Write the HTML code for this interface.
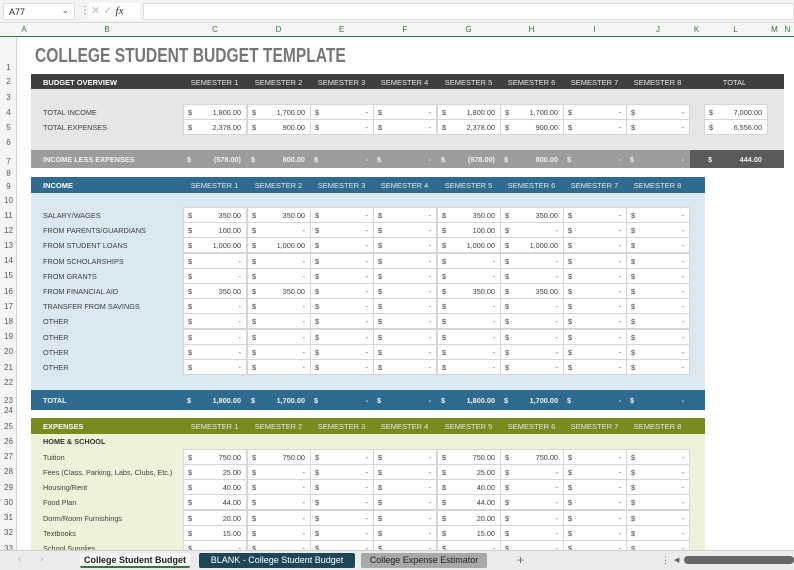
<!DOCTYPE html>
<html><head><meta charset="utf-8"><style>
*{margin:0;padding:0;box-sizing:border-box}
body{width:794px;height:570px;overflow:hidden;background:#fff;font-family:"Liberation Sans",sans-serif;position:relative;color:#404040}
div{position:absolute}
.fb{left:0;top:0;width:794px;height:23px;background:#f3f3f3;border-bottom:1px solid #d8d8d8}
.hd{left:0;top:23px;width:794px;height:14px;background:#f5f5f5;border-bottom:1px solid #2e7d32;font-size:8px;color:#2e7d32}
.hd span{position:absolute;top:2px;text-align:center}
.rn{left:0;top:37px;width:17px;height:514px;background:#f5f5f5;border-right:1px solid #d0d0d0;font-size:8px;color:#555}
.rn span{position:absolute;left:0;width:17px;text-align:center}
.bar{height:15px;font-size:7.5px;color:#e6e6e6}
.bar b{position:absolute;left:12px;top:4px;color:#fff;font-size:7.5px}
.sm{position:absolute;top:4px;width:63px;text-align:center}
.l{position:absolute;left:43px;font-size:7.3px;color:#404040}
.c{background:#fff;border:1px solid #d6d6d6;width:64px;height:16px;font-size:7.3px;color:#404040}
.c s,.t s{position:absolute;left:4px;top:3px;text-decoration:none}
.c u,.t u{position:absolute;right:5px;top:3px;text-decoration:none}
.t{height:15px;width:63px;font-size:7.3px;font-weight:bold;color:#f2f2f2}
.tab{top:553px;height:15px;font-size:9px;text-align:center;padding-top:2px;border-radius:2px}
</style></head><body>
<div class="fb">
<div style="left:3px;top:3px;width:72px;height:17px;background:#fff;border:1px solid #ddd;font-size:9px;padding:3px 5px;color:#222">A77<span style="position:absolute;right:5px;top:1px;font-size:9px;color:#555">&#8964;</span></div>
<div style="left:80px;top:5px;font-size:10px;color:#666">&#8942;</div>
<div style="left:88px;top:3px;width:52px;height:17px;background:#fff;font-size:11px;color:#bbb;padding:1px 3px">&#10005; &#10003; <i style="color:#333;font-family:'Liberation Serif',serif">fx</i></div>
<div style="left:143px;top:3px;width:651px;height:17px;background:#fff;border:1px solid #ddd"></div>
</div>
<div class="hd">
<span style="left:17px;width:14px">A</span><span style="left:31px;width:152px">B</span><span style="left:183px;width:64px">C</span><span style="left:247px;width:63px">D</span><span style="left:310px;width:63px">E</span><span style="left:373px;width:64px">F</span><span style="left:437px;width:63px">G</span><span style="left:500px;width:63px">H</span><span style="left:563px;width:63px">I</span><span style="left:626px;width:64px">J</span><span style="left:690px;width:13px">K</span><span style="left:703px;width:65px">L</span><span style="left:768px;width:13px">M</span><span style="left:781px;width:13px">N</span>
</div>
<div class="rn">
<span style="top:26px">1</span><span style="top:40px">2</span><span style="top:56px">3</span><span style="top:71px">4</span><span style="top:86px">5</span><span style="top:101px">6</span><span style="top:120px">7</span><span style="top:132px">8</span><span style="top:145px">9</span><span style="top:159px">10</span><span style="top:174px">11</span><span style="top:189px">12</span><span style="top:204px">13</span><span style="top:219px">14</span><span style="top:234px">15</span><span style="top:250px">16</span><span style="top:265px">17</span><span style="top:280px">18</span><span style="top:295px">19</span><span style="top:310px">20</span><span style="top:326px">21</span><span style="top:341px">22</span><span style="top:359px">23</span><span style="top:369px">24</span><span style="top:385px">25</span><span style="top:400px">26</span><span style="top:415px">27</span><span style="top:430px">28</span><span style="top:446px">29</span><span style="top:461px">30</span><span style="top:476px">31</span><span style="top:491px">32</span><span style="top:507px">33</span>
</div>

<div style="left:35px;top:45px;font-size:20px;font-weight:bold;color:#777;transform:scaleX(0.78);transform-origin:left top;white-space:nowrap">COLLEGE STUDENT BUDGET TEMPLATE</div>

<!-- overview -->
<div style="left:31px;top:89px;width:753px;height:79px;background:#e6e6e6"></div>
<div class="bar" style="left:31px;top:74px;width:753px;background:#3f3f3f"><b>BUDGET OVERVIEW</b>
<span class="sm" style="left:152px">SEMESTER 1</span><span class="sm" style="left:216px">SEMESTER 2</span><span class="sm" style="left:279px">SEMESTER 3</span><span class="sm" style="left:342px">SEMESTER 4</span><span class="sm" style="left:406px">SEMESTER 5</span><span class="sm" style="left:469px">SEMESTER 6</span><span class="sm" style="left:532px">SEMESTER 7</span><span class="sm" style="left:595px">SEMESTER 8</span><span class="sm" style="left:672px">TOTAL</span></div>
<div class="l" style="top:108px">TOTAL INCOME</div>
<div class="l" style="top:123px">TOTAL EXPENSES</div>
<div class="c" style="left:183px;top:104px"><s>$</s><u>1,800.00</u></div><div class="c" style="left:247px;top:104px"><s>$</s><u>1,700.00</u></div><div class="c" style="left:310px;top:104px"><s>$</s><u>-</u></div><div class="c" style="left:373px;top:104px"><s>$</s><u>-</u></div><div class="c" style="left:437px;top:104px"><s>$</s><u>1,800.00</u></div><div class="c" style="left:500px;top:104px"><s>$</s><u>1,700.00</u></div><div class="c" style="left:563px;top:104px"><s>$</s><u>-</u></div><div class="c" style="left:626px;top:104px"><s>$</s><u>-</u></div><div class="c" style="left:704px;top:104px"><s>$</s><u>7,000.00</u></div>
<div class="c" style="left:183px;top:119px"><s>$</s><u>2,378.00</u></div><div class="c" style="left:247px;top:119px"><s>$</s><u>900.00</u></div><div class="c" style="left:310px;top:119px"><s>$</s><u>-</u></div><div class="c" style="left:373px;top:119px"><s>$</s><u>-</u></div><div class="c" style="left:437px;top:119px"><s>$</s><u>2,378.00</u></div><div class="c" style="left:500px;top:119px"><s>$</s><u>900.00</u></div><div class="c" style="left:563px;top:119px"><s>$</s><u>-</u></div><div class="c" style="left:626px;top:119px"><s>$</s><u>-</u></div><div class="c" style="left:704px;top:119px"><s>$</s><u>6,556.00</u></div>
<div style="left:31px;top:150px;width:659px;height:18px;background:#9c9c9c"></div>
<div style="left:690px;top:150px;width:94px;height:18px;background:#5a5a5a"></div>
<div style="left:43px;top:155px;font-size:7.3px;font-weight:bold;color:#f2f2f2">INCOME LESS EXPENSES</div>
<div class="t" style="left:183px;top:152px"><s>$</s><u>(578.00)</u></div><div class="t" style="left:247px;top:152px"><s>$</s><u>800.00</u></div><div class="t" style="left:310px;top:152px"><s>$</s><u>-</u></div><div class="t" style="left:373px;top:152px"><s>$</s><u>-</u></div><div class="t" style="left:437px;top:152px"><s>$</s><u>(578.00)</u></div><div class="t" style="left:500px;top:152px"><s>$</s><u>800.00</u></div><div class="t" style="left:563px;top:152px"><s>$</s><u>-</u></div><div class="t" style="left:626px;top:152px"><s>$</s><u>-</u></div><div class="t" style="left:704px;top:152px"><s>$</s><u>444.00</u></div>

<!-- income -->
<div style="left:31px;top:193px;width:674px;height:197px;background:#dae8f2"></div>
<div class="bar" style="left:31px;top:177px;width:674px;height:16px;background:#2f6b8f"><b>INCOME</b>
<span class="sm" style="left:152px">SEMESTER 1</span><span class="sm" style="left:216px">SEMESTER 2</span><span class="sm" style="left:279px">SEMESTER 3</span><span class="sm" style="left:342px">SEMESTER 4</span><span class="sm" style="left:406px">SEMESTER 5</span><span class="sm" style="left:469px">SEMESTER 6</span><span class="sm" style="left:532px">SEMESTER 7</span><span class="sm" style="left:595px">SEMESTER 8</span></div>
<div class="l" style="top:211px">SALARY/WAGES</div>
<div class="l" style="top:226px">FROM PARENTS/GUARDIANS</div>
<div class="l" style="top:241px">FROM STUDENT LOANS</div>
<div class="l" style="top:257px">FROM SCHOLARSHIPS</div>
<div class="l" style="top:272px">FROM GRANTS</div>
<div class="l" style="top:287px">FROM FINANCIAL AID</div>
<div class="l" style="top:302px">TRANSFER FROM SAVINGS</div>
<div class="l" style="top:317px">OTHER</div>
<div class="l" style="top:333px">OTHER</div>
<div class="l" style="top:348px">OTHER</div>
<div class="l" style="top:363px">OTHER</div>
<div class="c" style="left:183px;top:207px"><s>$</s><u>350.00</u></div><div class="c" style="left:247px;top:207px"><s>$</s><u>350.00</u></div><div class="c" style="left:310px;top:207px"><s>$</s><u>-</u></div><div class="c" style="left:373px;top:207px"><s>$</s><u>-</u></div><div class="c" style="left:437px;top:207px"><s>$</s><u>350.00</u></div><div class="c" style="left:500px;top:207px"><s>$</s><u>350.00</u></div><div class="c" style="left:563px;top:207px"><s>$</s><u>-</u></div><div class="c" style="left:626px;top:207px"><s>$</s><u>-</u></div>
<div class="c" style="left:183px;top:222px"><s>$</s><u>100.00</u></div><div class="c" style="left:247px;top:222px"><s>$</s><u>-</u></div><div class="c" style="left:310px;top:222px"><s>$</s><u>-</u></div><div class="c" style="left:373px;top:222px"><s>$</s><u>-</u></div><div class="c" style="left:437px;top:222px"><s>$</s><u>100.00</u></div><div class="c" style="left:500px;top:222px"><s>$</s><u>-</u></div><div class="c" style="left:563px;top:222px"><s>$</s><u>-</u></div><div class="c" style="left:626px;top:222px"><s>$</s><u>-</u></div>
<div class="c" style="left:183px;top:237px"><s>$</s><u>1,000.00</u></div><div class="c" style="left:247px;top:237px"><s>$</s><u>1,000.00</u></div><div class="c" style="left:310px;top:237px"><s>$</s><u>-</u></div><div class="c" style="left:373px;top:237px"><s>$</s><u>-</u></div><div class="c" style="left:437px;top:237px"><s>$</s><u>1,000.00</u></div><div class="c" style="left:500px;top:237px"><s>$</s><u>1,000.00</u></div><div class="c" style="left:563px;top:237px"><s>$</s><u>-</u></div><div class="c" style="left:626px;top:237px"><s>$</s><u>-</u></div>
<div class="c" style="left:183px;top:253px"><s>$</s><u>-</u></div><div class="c" style="left:247px;top:253px"><s>$</s><u>-</u></div><div class="c" style="left:310px;top:253px"><s>$</s><u>-</u></div><div class="c" style="left:373px;top:253px"><s>$</s><u>-</u></div><div class="c" style="left:437px;top:253px"><s>$</s><u>-</u></div><div class="c" style="left:500px;top:253px"><s>$</s><u>-</u></div><div class="c" style="left:563px;top:253px"><s>$</s><u>-</u></div><div class="c" style="left:626px;top:253px"><s>$</s><u>-</u></div>
<div class="c" style="left:183px;top:268px"><s>$</s><u>-</u></div><div class="c" style="left:247px;top:268px"><s>$</s><u>-</u></div><div class="c" style="left:310px;top:268px"><s>$</s><u>-</u></div><div class="c" style="left:373px;top:268px"><s>$</s><u>-</u></div><div class="c" style="left:437px;top:268px"><s>$</s><u>-</u></div><div class="c" style="left:500px;top:268px"><s>$</s><u>-</u></div><div class="c" style="left:563px;top:268px"><s>$</s><u>-</u></div><div class="c" style="left:626px;top:268px"><s>$</s><u>-</u></div>
<div class="c" style="left:183px;top:283px"><s>$</s><u>350.00</u></div><div class="c" style="left:247px;top:283px"><s>$</s><u>350.00</u></div><div class="c" style="left:310px;top:283px"><s>$</s><u>-</u></div><div class="c" style="left:373px;top:283px"><s>$</s><u>-</u></div><div class="c" style="left:437px;top:283px"><s>$</s><u>350.00</u></div><div class="c" style="left:500px;top:283px"><s>$</s><u>350.00</u></div><div class="c" style="left:563px;top:283px"><s>$</s><u>-</u></div><div class="c" style="left:626px;top:283px"><s>$</s><u>-</u></div>
<div class="c" style="left:183px;top:298px"><s>$</s><u>-</u></div><div class="c" style="left:247px;top:298px"><s>$</s><u>-</u></div><div class="c" style="left:310px;top:298px"><s>$</s><u>-</u></div><div class="c" style="left:373px;top:298px"><s>$</s><u>-</u></div><div class="c" style="left:437px;top:298px"><s>$</s><u>-</u></div><div class="c" style="left:500px;top:298px"><s>$</s><u>-</u></div><div class="c" style="left:563px;top:298px"><s>$</s><u>-</u></div><div class="c" style="left:626px;top:298px"><s>$</s><u>-</u></div>
<div class="c" style="left:183px;top:313px"><s>$</s><u>-</u></div><div class="c" style="left:247px;top:313px"><s>$</s><u>-</u></div><div class="c" style="left:310px;top:313px"><s>$</s><u>-</u></div><div class="c" style="left:373px;top:313px"><s>$</s><u>-</u></div><div class="c" style="left:437px;top:313px"><s>$</s><u>-</u></div><div class="c" style="left:500px;top:313px"><s>$</s><u>-</u></div><div class="c" style="left:563px;top:313px"><s>$</s><u>-</u></div><div class="c" style="left:626px;top:313px"><s>$</s><u>-</u></div>
<div class="c" style="left:183px;top:329px"><s>$</s><u>-</u></div><div class="c" style="left:247px;top:329px"><s>$</s><u>-</u></div><div class="c" style="left:310px;top:329px"><s>$</s><u>-</u></div><div class="c" style="left:373px;top:329px"><s>$</s><u>-</u></div><div class="c" style="left:437px;top:329px"><s>$</s><u>-</u></div><div class="c" style="left:500px;top:329px"><s>$</s><u>-</u></div><div class="c" style="left:563px;top:329px"><s>$</s><u>-</u></div><div class="c" style="left:626px;top:329px"><s>$</s><u>-</u></div>
<div class="c" style="left:183px;top:344px"><s>$</s><u>-</u></div><div class="c" style="left:247px;top:344px"><s>$</s><u>-</u></div><div class="c" style="left:310px;top:344px"><s>$</s><u>-</u></div><div class="c" style="left:373px;top:344px"><s>$</s><u>-</u></div><div class="c" style="left:437px;top:344px"><s>$</s><u>-</u></div><div class="c" style="left:500px;top:344px"><s>$</s><u>-</u></div><div class="c" style="left:563px;top:344px"><s>$</s><u>-</u></div><div class="c" style="left:626px;top:344px"><s>$</s><u>-</u></div>
<div class="c" style="left:183px;top:359px"><s>$</s><u>-</u></div><div class="c" style="left:247px;top:359px"><s>$</s><u>-</u></div><div class="c" style="left:310px;top:359px"><s>$</s><u>-</u></div><div class="c" style="left:373px;top:359px"><s>$</s><u>-</u></div><div class="c" style="left:437px;top:359px"><s>$</s><u>-</u></div><div class="c" style="left:500px;top:359px"><s>$</s><u>-</u></div><div class="c" style="left:563px;top:359px"><s>$</s><u>-</u></div><div class="c" style="left:626px;top:359px"><s>$</s><u>-</u></div>
<div style="left:31px;top:390px;width:674px;height:20px;background:#2f6b8f"></div>
<div style="left:43px;top:396px;font-size:7.3px;font-weight:bold;color:#f2f2f2">TOTAL</div>
<div class="t" style="left:183px;top:393px"><s>$</s><u>1,800.00</u></div><div class="t" style="left:247px;top:393px"><s>$</s><u>1,700.00</u></div><div class="t" style="left:310px;top:393px"><s>$</s><u>-</u></div><div class="t" style="left:373px;top:393px"><s>$</s><u>-</u></div><div class="t" style="left:437px;top:393px"><s>$</s><u>1,800.00</u></div><div class="t" style="left:500px;top:393px"><s>$</s><u>1,700.00</u></div><div class="t" style="left:563px;top:393px"><s>$</s><u>-</u></div><div class="t" style="left:626px;top:393px"><s>$</s><u>-</u></div>

<!-- expenses -->
<div style="left:31px;top:434px;width:674px;height:117px;background:#eef2d8"></div>
<div class="bar" style="left:31px;top:418px;width:674px;height:16px;background:#7b8a1e"><b>EXPENSES</b>
<span class="sm" style="left:152px">SEMESTER 1</span><span class="sm" style="left:216px">SEMESTER 2</span><span class="sm" style="left:279px">SEMESTER 3</span><span class="sm" style="left:342px">SEMESTER 4</span><span class="sm" style="left:406px">SEMESTER 5</span><span class="sm" style="left:469px">SEMESTER 6</span><span class="sm" style="left:532px">SEMESTER 7</span><span class="sm" style="left:595px">SEMESTER 8</span></div>
<div class="l" style="top:437px;font-weight:bold;color:#333">HOME &amp; SCHOOL</div>
<div class="l" style="top:453px">Tuition</div>
<div class="l" style="top:468px">Fees (Class, Parking, Labs, Clubs, Etc.)</div>
<div class="l" style="top:483px">Housing/Rent</div>
<div class="l" style="top:498px">Food Plan</div>
<div class="l" style="top:514px">Dorm/Room Furnishings</div>
<div class="l" style="top:529px">Textbooks</div>
<div class="l" style="top:544px">School Supplies</div>
<div class="c" style="left:183px;top:449px"><s>$</s><u>750.00</u></div><div class="c" style="left:247px;top:449px"><s>$</s><u>750.00</u></div><div class="c" style="left:310px;top:449px"><s>$</s><u>-</u></div><div class="c" style="left:373px;top:449px"><s>$</s><u>-</u></div><div class="c" style="left:437px;top:449px"><s>$</s><u>750.00</u></div><div class="c" style="left:500px;top:449px"><s>$</s><u>750.00</u></div><div class="c" style="left:563px;top:449px"><s>$</s><u>-</u></div><div class="c" style="left:626px;top:449px"><s>$</s><u>-</u></div>
<div class="c" style="left:183px;top:464px"><s>$</s><u>25.00</u></div><div class="c" style="left:247px;top:464px"><s>$</s><u>-</u></div><div class="c" style="left:310px;top:464px"><s>$</s><u>-</u></div><div class="c" style="left:373px;top:464px"><s>$</s><u>-</u></div><div class="c" style="left:437px;top:464px"><s>$</s><u>25.00</u></div><div class="c" style="left:500px;top:464px"><s>$</s><u>-</u></div><div class="c" style="left:563px;top:464px"><s>$</s><u>-</u></div><div class="c" style="left:626px;top:464px"><s>$</s><u>-</u></div>
<div class="c" style="left:183px;top:479px"><s>$</s><u>40.00</u></div><div class="c" style="left:247px;top:479px"><s>$</s><u>-</u></div><div class="c" style="left:310px;top:479px"><s>$</s><u>-</u></div><div class="c" style="left:373px;top:479px"><s>$</s><u>-</u></div><div class="c" style="left:437px;top:479px"><s>$</s><u>40.00</u></div><div class="c" style="left:500px;top:479px"><s>$</s><u>-</u></div><div class="c" style="left:563px;top:479px"><s>$</s><u>-</u></div><div class="c" style="left:626px;top:479px"><s>$</s><u>-</u></div>
<div class="c" style="left:183px;top:494px"><s>$</s><u>44.00</u></div><div class="c" style="left:247px;top:494px"><s>$</s><u>-</u></div><div class="c" style="left:310px;top:494px"><s>$</s><u>-</u></div><div class="c" style="left:373px;top:494px"><s>$</s><u>-</u></div><div class="c" style="left:437px;top:494px"><s>$</s><u>44.00</u></div><div class="c" style="left:500px;top:494px"><s>$</s><u>-</u></div><div class="c" style="left:563px;top:494px"><s>$</s><u>-</u></div><div class="c" style="left:626px;top:494px"><s>$</s><u>-</u></div>
<div class="c" style="left:183px;top:510px"><s>$</s><u>20.00</u></div><div class="c" style="left:247px;top:510px"><s>$</s><u>-</u></div><div class="c" style="left:310px;top:510px"><s>$</s><u>-</u></div><div class="c" style="left:373px;top:510px"><s>$</s><u>-</u></div><div class="c" style="left:437px;top:510px"><s>$</s><u>20.00</u></div><div class="c" style="left:500px;top:510px"><s>$</s><u>-</u></div><div class="c" style="left:563px;top:510px"><s>$</s><u>-</u></div><div class="c" style="left:626px;top:510px"><s>$</s><u>-</u></div>
<div class="c" style="left:183px;top:525px"><s>$</s><u>15.00</u></div><div class="c" style="left:247px;top:525px"><s>$</s><u>-</u></div><div class="c" style="left:310px;top:525px"><s>$</s><u>-</u></div><div class="c" style="left:373px;top:525px"><s>$</s><u>-</u></div><div class="c" style="left:437px;top:525px"><s>$</s><u>15.00</u></div><div class="c" style="left:500px;top:525px"><s>$</s><u>-</u></div><div class="c" style="left:563px;top:525px"><s>$</s><u>-</u></div><div class="c" style="left:626px;top:525px"><s>$</s><u>-</u></div>
<div class="c" style="left:183px;top:540px"><s>$</s><u>-</u></div><div class="c" style="left:247px;top:540px"><s>$</s><u>-</u></div><div class="c" style="left:310px;top:540px"><s>$</s><u>-</u></div><div class="c" style="left:373px;top:540px"><s>$</s><u>-</u></div><div class="c" style="left:437px;top:540px"><s>$</s><u>-</u></div><div class="c" style="left:500px;top:540px"><s>$</s><u>-</u></div><div class="c" style="left:563px;top:540px"><s>$</s><u>-</u></div><div class="c" style="left:626px;top:540px"><s>$</s><u>-</u></div>

<!-- tabs -->
<div style="left:0;top:550px;width:794px;height:20px;background:#ebebeb;border-top:1px solid #d0d0d0"></div>
<div style="left:18px;top:554px;font-size:10px;color:#aaa">&lsaquo;</div>
<div style="left:40px;top:554px;font-size:10px;color:#aaa">&rsaquo;</div>
<div class="tab" style="left:80px;width:110px;background:#f7f7f7;color:#222;border-bottom:2px solid #2e7d32;font-weight:bold">College Student Budget</div>
<div class="tab" style="left:199px;width:156px;background:#1e4659;color:#fff">BLANK - College Student Budget</div>
<div class="tab" style="left:361px;width:126px;background:#a8a8a8;color:#222">College Expense Estimator</div>
<div style="left:517px;top:553px;font-size:12px;color:#666">+</div>
<div style="left:661px;top:555px;font-size:9px;color:#555">&#8942;</div>
<div style="left:674px;top:556px;width:6px;height:8px;font-size:7px;color:#666">&#9664;</div>
<div style="left:684px;top:556px;width:110px;height:8px;background:#666;border-radius:4px"></div>
</body></html>
